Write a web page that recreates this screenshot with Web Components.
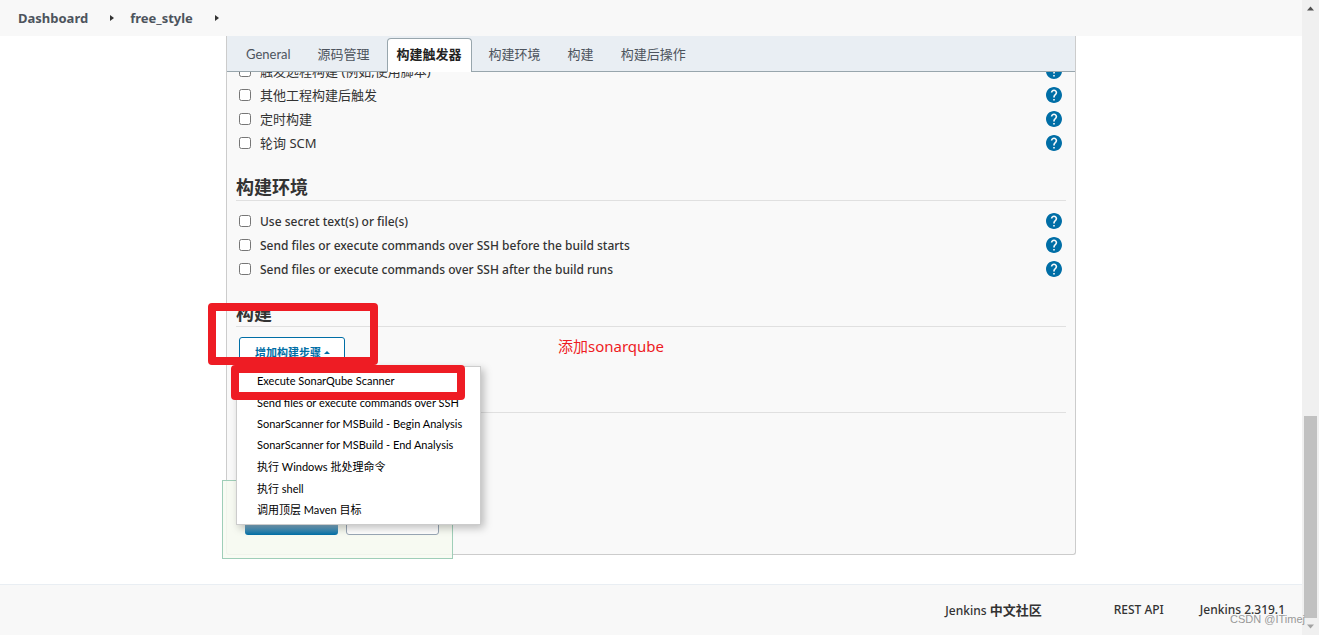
<!DOCTYPE html>
<html lang="zh">
<head>
<meta charset="utf-8">
<title>free_style Config [Jenkins]</title>
<style>
  body {
    margin: 0;
    background: #fff;
    color: #333;
    font-family: "Noto Sans", "Noto Sans CJK SC", sans-serif;
    font-size: 12px;
  }
  page-footer b {
    font-size: 13px;
  }
</style>
</head>
<body>
<page-frame>
  <bread-crumbs slot="header">
    <a href="#">Dashboard</a>
    <a href="#">free_style</a>
  </bread-crumbs>

  <config-panel>
    <tab-bar slot="tabs" labels="General,源码管理,构建触发器,构建环境,构建,构建后操作" active="2"></tab-bar>

    <config-section class="scrolled">
      <check-row lang="zh" label="触发远程构建 (例如,使用脚本)"></check-row>
      <check-row lang="zh" label="其他工程构建后触发"></check-row>
      <check-row lang="zh" label="定时构建"></check-row>
      <check-row lang="zh" label="轮询 SCM"></check-row>
    </config-section>

    <config-section heading="构建环境">
      <check-row label="Use secret text(s) or file(s)"></check-row>
      <check-row label="Send files or execute commands over SSH before the build starts"></check-row>
      <check-row label="Send files or execute commands over SSH after the build runs"></check-row>
    </config-section>

    <config-section heading="构建">
      <step-menu label="增加构建步骤">
        <button>Execute SonarQube Scanner</button>
        <button>Send files or execute commands over SSH</button>
        <button>SonarScanner for MSBuild - Begin Analysis</button>
        <button>SonarScanner for MSBuild - End Analysis</button>
        <button>执行 Windows 批处理命令</button>
        <button>执行 shell</button>
        <button>调用顶层 Maven 目标</button>
      </step-menu>
    </config-section>

    <section-rule></section-rule>
    <save-bar></save-bar>

    <red-note slot="notes">添加sonarqube</red-note>
  </config-panel>

  <page-footer slot="footer">
    <a href="#">Jenkins <b>中文社区</b></a>
    <a href="#">REST API</a>
    <a href="#">Jenkins 2.319.1</a>
  </page-footer>
  <scroll-track slot="scroll"></scroll-track>
</page-frame>

<script>
function define(name, markup, setup) {
  customElements.define(name, class extends HTMLElement {
    constructor() {
      super();
      this.attachShadow({ mode: "open" });
    }

    connectedCallback() {
      this.shadowRoot.innerHTML = markup(this);
      if (setup) setup(this);
    }
  });
}

define("page-frame", () => `
  <style>
    :host {
      display: flex;
      height: 100vh;
      overflow: hidden;
    }
    .page {
      flex: 1;
      min-width: 0;
      display: flex;
      flex-direction: column;
    }
    main {
      flex: 1;
      min-height: 0;
      padding-bottom: 29px;
      display: flex;
      justify-content: center;
    }
  </style>
  <div class="page">
    <slot name="header"></slot>
    <main><slot></slot></main>
    <slot name="footer"></slot>
  </div>
  <slot name="scroll"></slot>
`);

define("bread-crumbs", () => `
  <style>
    :host {
      display: flex;
      align-items: center;
      height: 36px;
      padding-left: 18px;
      background: #f8f8f8;
    }
    ::slotted(a) {
      color: #4d545d;
      font-size: 13px;
      font-weight: 700;
      text-decoration: none;
    }
    svg {
      width: 4px;
      height: 6px;
      margin: 0 16px 0 22px;
      fill: #333;
    }
  </style>
  <slot></slot>
`, el => {
  // an arrow follows every crumb
  const root = el.shadowRoot;
  root.querySelector("slot").remove();
  [...el.children].forEach((link, i) => {
    link.slot = "crumb" + i;
    root.innerHTML += `<slot name="crumb${i}"></slot><svg viewBox="0 0 4 6"><path d="M0 0l4 3-4 3z"/></svg>`;
  });
});

define("config-panel", () => `
  <style>
    :host {
      position: relative;
      box-sizing: border-box;
      flex: 0 1 850px;
      display: flex;
      flex-direction: column;
      border: 1px solid #ccc;
      border-top: 0;
      border-radius: 0 0 3px 3px;
      background: #f9f9f9;
    }
    .body {
      flex: 1;
      display: flex;
      flex-direction: column;
      padding: 0 9px;
      clip-path: inset(0 -30px -30px -30px);
    }
    .mark {
      position: absolute;
      z-index: 3;
      box-sizing: border-box;
      border: 8px solid #ee1c24;
      border-radius: 4px;
      pointer-events: none;
    }
    .step {
      left: -19px;
      top: 267px;
      width: 170px;
      height: 62px;
    }
    .item {
      left: 4px;
      top: 329px;
      width: 234px;
      height: 35px;
    }
  </style>
  <slot name="tabs"></slot>
  <div class="body"><slot></slot></div>
  <div class="mark step"></div>
  <div class="mark item"></div>
  <slot name="notes"></slot>
`);

define("tab-bar", el => `
  <style>
    :host {
      display: flex;
      align-items: flex-end;
      height: 35px;
      padding-left: 9px;
      background: #e9eef3;
      border-bottom: 1px solid #98a6ad;
    }
    a {
      height: 33px;
      margin-bottom: -1px;
      padding: 0 9px;
      border: 1px solid transparent;
      border-bottom: 0;
      border-radius: 4px 4px 0 0;
      line-height: 30px;
      font-family: Lato, "Noto Sans CJK SC", sans-serif;
      font-size: 13px;
      color: #4d545d;
      text-decoration: none;
    }
    a + a {
      margin-left: 7px;
    }
    a.active {
      border-color: #98a6ad;
      background: #fff;
      color: #222;
      font-weight: 700;
    }
  </style>
  ${el.getAttribute("labels").split(",").map((label, i) =>
    `<a href="#"${i == el.getAttribute("active") ? ' class="active"' : ""}>${label}</a>`).join("")}
`);

define("config-section", el => `
  <style>
    :host {
      display: block;
    }
    :host(.scrolled) {
      margin-top: -13px;
    }
    h2 {
      margin: 0;
      padding: 20px 0 2px;
      border-bottom: 1px solid #e0e0e0;
      line-height: 22px;
      font-size: 18px;
      font-weight: 700;
    }
    .rows {
      padding: 0 0 1px 3px;
    }
    h2 + .rows {
      padding-top: 8px;
    }
  </style>
  ${el.hasAttribute("heading") ? `<h2>${el.getAttribute("heading")}</h2>` : ""}
  <div class="rows"><slot></slot></div>
`);

define("check-row", el => `
  <style>
    :host {
      display: flex;
      align-items: center;
      height: 24px;
      padding-right: 4px;
    }
    input {
      width: 12px;
      height: 12px;
      margin: 0 9px 1px 0;
    }
    label {
      flex: 1;
      font-weight: 500;
      white-space: nowrap;
    }
    :host([lang="zh"]) label {
      font-size: 13px;
      font-weight: 400;
      line-height: 18px;
    }
    a, svg {
      display: block;
      width: 16px;
      height: 16px;
    }
    svg {
      fill: #006ea6;
    }
  </style>
  <input type="checkbox" id="box">
  <label for="box">${el.getAttribute("label")}</label>
  <a href="#" aria-label="Help"><svg viewBox="2 2 20 20"><path d="M12 2C6.48 2 2 6.48 2 12s4.48 10 10 10 10-4.48 10-10S17.52 2 12 2zm1 17h-2v-2h2v2zm2.07-7.75l-.9.92C13.45 12.9 13 13.5 13 15h-2v-.5c0-1.1.45-2.1 1.17-2.83l1.24-1.26c.37-.36.59-.86.59-1.41 0-1.1-.9-2-2-2s-2 .9-2 2H8c0-2.21 1.79-4 4-4s4 1.79 4 4c0 .88-.36 1.68-.93 2.25z"/></svg></a>
`);

define("step-menu", el => `
  <style>
    :host {
      display: block;
      position: relative;
      padding-top: 2px;
    }
    .toggle {
      display: flex;
      align-items: center;
      gap: 3px;
      height: 30px;
      padding: 0 14px 0 15px;
      border: 1px solid #006ea6;
      border-radius: 3px;
      background: #fff;
      color: #006ea6;
      font: inherit;
      font-size: 11px;
      font-weight: 700;
    }
    svg {
      width: 6px;
      height: 3px;
      fill: #006ea6;
    }
    .menu {
      position: absolute;
      z-index: 2;
      left: -3px;
      top: 31px;
      box-sizing: border-box;
      width: 245px;
      height: 159px;
      padding: 3px 0 4px;
      display: grid;
      grid-auto-rows: 1fr;
      border: 1px solid #ccc;
      background: #fff;
      box-shadow: 3px 3px 8px rgba(0, 0, 0, 0.25);
    }
    ::slotted(button) {
      padding: 0 0 0 20px;
      border: 0;
      background: none;
      color: #000;
      font-family: Lato, "Noto Sans CJK SC", sans-serif;
      font-size: 11px;
      text-align: left;
      white-space: nowrap;
    }
  </style>
  <button class="toggle">${el.getAttribute("label")}<svg viewBox="0 0 6 3"><path d="M0 3l3-3 3 3z"/></svg></button>
  <div class="menu"><slot></slot></div>
`);

define("section-rule", () => `
  <style>
    :host {
      display: block;
      margin-top: 44px;
      border-bottom: 1px solid #e0e0e0;
    }
  </style>
`);

define("save-bar", () => `
  <style>
    :host {
      display: flex;
      align-self: flex-start;
      gap: 8px;
      box-sizing: border-box;
      width: 231px;
      height: 79px;
      margin: auto 0 -5px -14px;
      padding: 22px 13px 23px 22px;
      border: 1px solid #9fceb8;
      background: rgba(247, 250, 241, 0.85);
    }
    button {
      width: 50%;
      border: 1px solid #98a6b5;
      border-radius: 3px;
      background: #fff;
    }
    .save {
      border: 0;
      background: linear-gradient(#a4bfd0, #a4bfd0 60%, #006ea6);
    }
  </style>
  <button class="save" aria-label="Save"></button>
  <button aria-label="Apply"></button>
`);

define("red-note", () => `
  <style>
    :host {
      position: absolute;
      left: 331px;
      top: 299px;
      line-height: 22px;
      font-size: 15px;
      color: #ee1c24;
    }
  </style>
  <slot></slot>
`);

define("page-footer", () => `
  <style>
    :host {
      position: relative;
      display: flex;
      justify-content: flex-end;
      align-items: center;
      box-sizing: border-box;
      height: 51px;
      padding-right: 17px;
      border-top: 1px solid #e9eef3;
      background: #f8f8f8;
    }
    ::slotted(a) {
      margin-left: 36px;
      color: #333;
      font-weight: 500;
      line-height: 18px;
      text-decoration: none;
    }
    ::slotted(a:first-child) {
      margin-right: 36px;
    }
    .stamp {
      position: absolute;
      z-index: 4;
      right: -3px;
      bottom: 8px;
      color: #999;
      font: 11px/16px "Liberation Sans", sans-serif;
    }
  </style>
  <slot></slot>
  <span class="stamp">CSDN @ITimej</span>
`);

define("scroll-track", () => `
  <style>
    :host {
      display: flex;
      flex-direction: column;
      align-items: center;
      width: 17px;
      background: #f0f0f0;
    }
    svg {
      width: 17px;
      height: 17px;
      fill: #505050;
    }
    .gap {
      flex: 399;
    }
    .thumb {
      flex: 202;
      width: 13px;
      background: #c1c1c1;
    }
    .down {
      fill: #a3a3a3;
    }
  </style>
  <svg viewBox="0 0 17 17"><path d="M5 10.500l3.500-4 3.500 4z"/></svg>
  <div class="gap"></div>
  <div class="thumb"></div>
  <svg class="down" viewBox="0 0 17 17"><path d="M5 6.500l3.500 4 3.500-4z"/></svg>
`);
</script>
</body>
</html>
